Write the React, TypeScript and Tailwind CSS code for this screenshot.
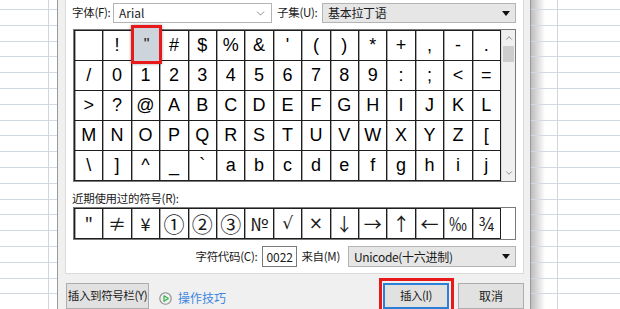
import { ChevronDown, ChevronUp } from "lucide-react";

const cjk = "font-['Microsoft_YaHei','Noto_Sans_CJK_SC',sans-serif]";
const arial = "font-['Liberation_Sans',Arial,sans-serif]";

const ROWS: string[][] = [
  ["", "!", '"', "#", "$", "%", "&", "'", "(", ")", "*", "+", ",", "-", "."],
  "/0123456789:;<=".split(""),
  ">?@ABCDEFGHIJKL".split(""),
  "MNOPQRSTUVWXYZ[".split(""),
  "\\]^_`abcdefghij".split(""),
];

// index of the selected glyph; it is drawn in the raised overlay instead
const SELECTED = 2;

const RECENT = ['"', "≠", "¥", "①", "②", "③", "№", "√", "×", "↓", "→", "↑", "←", "‰", "¾"];

const recentClass = (i: number) => {
  if (i >= 3 && i <= 5) return "text-[21px]";
  if (i === 7 || i === 8) return "text-[17px] font-['DejaVu_Sans',sans-serif]";
  return "text-[18px]";
};

const SheetCol = ({ className }: { className: string }) => (
  <div className={"flex flex-col " + className}>
    <div className="h-[10px] shrink-0 border-b border-[#d3d9e3]" />
    {Array.from({ length: 19 }).map((_, i) => (
      <div key={i} className="h-[15.8px] shrink-0 border-b border-[#d3d9e3]" />
    ))}
  </div>
);

const DownTriangle = () => (
  <svg width="8" height="5" viewBox="0 0 8 5">
    <polygon points="0,0 8,0 4,5" fill="#111" />
  </svg>
);

const PlayIcon = () => (
  <svg width="13" height="13" viewBox="0 0 13 13">
    <circle cx="6.5" cy="6.5" r="5.7" fill="none" stroke="#8a8a8a" strokeWidth="1.1" />
    <polygon points="5,3.8 9.3,6.5 5,9.2" fill="none" stroke="#2fb24a" strokeWidth="1.2" strokeLinejoin="round" />
  </svg>
);

const App = () => {
  return (
    <div className={"flex h-[309px] w-[620px] overflow-hidden bg-white text-[#1a1a1a] " + cjk}>
      {/* spreadsheet behind, left */}
      <div className="flex w-[57px] shrink-0">
        <SheetCol className="w-[49px] border-r border-[#cfd6e0]" />
        <SheetCol className="flex-1" />
      </div>

      {/* symbol dialog */}
      <div className="flex w-[474px] shrink-0 flex-col border-x border-[#9a9a9a] bg-[#f0f0f0]">
        <div className="ml-[7px] w-[459px] whitespace-nowrap border-x border-b border-[#dadada] bg-white pb-[6px] pl-[6px] pr-[7px] text-[11.5px] tracking-[-0.3px]">
          <div className="mt-[3px] flex h-[20px] items-center">
            <span className="w-[41px] shrink-0">字体(F):</span>
            <div className="flex h-[20px] w-[159px] shrink-0 items-center justify-between border border-[#b4b4b4] bg-white pl-[5px] pr-[4px]">
              <span className="text-[12px] tracking-normal text-[#222]">Arial</span>
              <ChevronDown size={13} strokeWidth={1.2} color="#555" />
            </div>
            <span className="ml-[5px] w-[45px] shrink-0">子集(U):</span>
            <div className="flex h-[20px] flex-1 items-center justify-between border border-[#b4b4b4] bg-[#e6e6e6] pl-[5px] pr-[5px]">
              <span className="text-[12px]">基本拉丁语</span>
              <DownTriangle />
            </div>
          </div>

          <div className="relative ml-[1px] mt-[6px] flex h-[153px] w-[443px] border border-[#7a7a7a] tracking-normal">
            <div className={"grid w-[427px] grid-cols-15 border-l border-t border-[#1e1e1e] text-[18px] " + arial}>
              {ROWS.flat().map((c, i) => (
                <div
                  key={i}
                  className="flex h-[30px] items-center justify-center border-b border-r border-[#1e1e1e] shadow-[inset_1px_0_0_#a8a8a8] text-black"
                >
                  {i === SELECTED ? "" : c}
                </div>
              ))}
            </div>
            <div className="flex flex-1 flex-col border-l border-[#dcdcdc] bg-[#f0f0f0]">
              <div className="flex h-[16px] items-center justify-center">
                <ChevronUp size={10} strokeWidth={1.6} color="#606060" />
              </div>
              <div className="mx-[1px] h-[16px] bg-[#cdcdcd]" />
              <div className="flex-1" />
              <div className="flex h-[16px] items-center justify-center">
                <ChevronDown size={10} strokeWidth={1.6} color="#606060" />
              </div>
            </div>
            <div
              className={
                "absolute left-[57px] top-[-5px] flex h-[39px] w-[31px] items-center justify-center border-[3px] border-[#e8191b] bg-[#cdd4dc] text-[16px] shadow-[0_0_3px_rgba(0,0,0,0.35)] " +
                arial
              }
            >
              "
            </div>
          </div>

          <div className="mt-[8px] leading-[16px]">近期使用过的符号(R):</div>

          <div className="ml-[1px] mt-[1px] flex h-[33px] w-[443px] border border-[#7a7a7a] tracking-normal">
            <div className="flex h-full w-[427px] border-b border-l border-t border-[#1e1e1e]">
              {RECENT.map((c, i) => (
                <div
                  key={i}
                  className={
                    "flex flex-1 items-center justify-center border-r border-[#1e1e1e] shadow-[inset_1px_0_0_#a8a8a8] " +
                    recentClass(i)
                  }
                >
                  {c}
                </div>
              ))}
            </div>
          </div>

          <div className="mt-[6px] flex h-[21px] items-center justify-end">
            <span>字符代码(C):</span>
            <div className="ml-[5px] flex h-[21px] w-[35px] items-center border border-[#7a7a7a] bg-white pl-[3px] text-[12px] tracking-normal">
              0022
            </div>
            <span className="ml-[4px]">来自(M)</span>
            <div className="ml-[8px] flex h-[21px] w-[168px] items-center justify-between border border-[#b4b4b4] bg-[#e6e6e6] pl-[5px] pr-[5px]">
              <span className="text-[12px]">Unicode(十六进制)</span>
              <DownTriangle />
            </div>
          </div>
        </div>

        <div className="flex items-start whitespace-nowrap pl-[8px] pr-[6px] pt-[4px] text-[11.5px] tracking-[-0.4px]">
          <button className="mt-[5px] flex h-[26px] w-[83px] items-center justify-center border border-[#adadad] bg-[#e1e1e1]">
            插入到符号栏(Y)
          </button>
          <div className="ml-[10px] mt-[11px] flex items-center">
            <PlayIcon />
            <span className="ml-[6px] text-[12px] tracking-normal text-[#3d86e0]">操作技巧</span>
          </div>
          <div className="flex-1" />
          <div className="h-[36px] w-[75px] border-[3px] border-[#e8191b] pl-[1px] pt-[2px]">
            <button className="flex h-[26px] w-[66px] items-center justify-center border-2 border-[#2c7fd6] bg-[#e1e1e1]">
              插入(I)
            </button>
          </div>
          <button className="ml-[4px] mt-[5px] flex h-[26px] w-[66px] items-center justify-center border border-[#adadad] bg-[#e1e1e1] text-[12px] tracking-normal">
            取消
          </button>
        </div>
      </div>

      {/* spreadsheet behind, right */}
      <div className="flex flex-1 bg-[linear-gradient(to_right,#bdbdbd_0px,#ffffff_14px)]">
        <SheetCol className="w-[27px] border-r border-[#cfd6e0]" />
        <SheetCol className="flex-1" />
      </div>
    </div>
  );
};

export default App;
